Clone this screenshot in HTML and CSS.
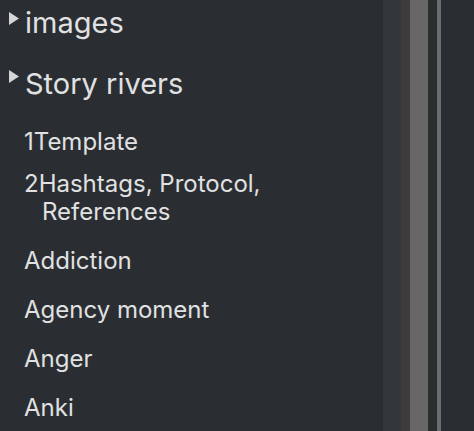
FILE: index.html
```html
<!DOCTYPE html>
<html lang="en">
<head>
  <meta charset="UTF-8" />
  <meta name="viewport" content="width=device-width, initial-scale=1.0"/>
  <title>Pages</title>
  <link rel="stylesheet" href="styles.css">
</head>
<body>

<div class="layout">
  <!-- page tree -->
  <div class="tree">
    <div class="folder">
      <svg class="caret" width="10" height="13" viewBox="0 0 10 13"><path d="M0 0 L10 6.5 L0 13 Z" fill="#d4d5d6"/></svg>
      <span>images</span>
    </div>
    <div class="folder folder-second">
      <svg class="caret" width="10" height="13" viewBox="0 0 10 13"><path d="M0 0 L10 6.5 L0 13 Z" fill="#d4d5d6"/></svg>
      <span>Story rivers</span>
    </div>

    <div class="pages">
      <div class="page page-tight">1Template</div>
      <div class="page">2Hashtags, Protocol, References</div>
      <div class="page">Addiction</div>
      <div class="page">Agency moment</div>
      <div class="page">Anger</div>
      <div class="page">Anki</div>
    </div>
  </div>

  <!-- scrollbar / split strips -->
  <div class="strip strip-a"></div>
  <div class="strip strip-b"></div>
  <div class="strip strip-c"></div>
  <div class="strip strip-d"></div>
  <div class="strip strip-e"></div>
  <div class="strip strip-f"></div>
</div>

</body>
</html>
```

FILE: styles.css
```css
body {
  margin: 0;
  height: 431px;
  overflow: hidden;
  background: #2a2d31;
  font-family: Inter, "Noto Sans", sans-serif;
  color: #e0e1e2;
}

.layout {
  display: flex;
  height: 431px;
}

.tree {
  width: 383px;
  flex-shrink: 0;
  padding-top: 5px;
  box-sizing: border-box;
}

.folder {
  display: flex;
  align-items: flex-start;
  font-size: 29px;
  line-height: 36px;
  padding-left: 9px;
}

.folder .caret {
  margin-top: 7px;
  margin-right: 6px;
  flex-shrink: 0;
}

.folder-second {
  margin-top: 25px;
}

.folder-second .caret {
  margin-top: 4px;
}

.pages {
  display: flex;
  flex-direction: column;
  gap: 21px;
  margin-top: 26px;
}

.page {
  font-size: 24px;
  line-height: 28px;
  padding-left: 42px;
  text-indent: -18px;
  padding-right: 40px;
}

.page-tight {
  margin-bottom: -7px;
}

.strip {
  flex-shrink: 0;
  height: 100%;
}

.strip-a { width: 18px; background: #33373a; }
.strip-b { width: 9px; background: #3f3b3b; }
.strip-c { width: 18px; background: #676767; }
.strip-d { width: 9px; background: #2a2e2f; }
.strip-e { width: 4px; background: #6a6d6f; }
.strip-f { flex: 1; background: #2a2d31; }
```
